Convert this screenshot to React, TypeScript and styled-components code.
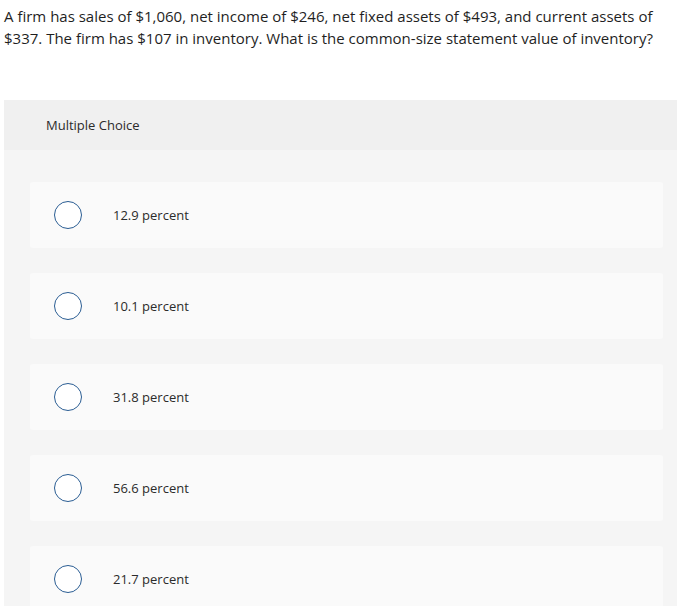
import React from 'react';
import styled, { createGlobalStyle } from 'styled-components';

const Global = createGlobalStyle`
	html, body {
		margin: 0;
		padding: 0;
		background: #ffffff;
		overflow: hidden;
	}
	body {
		font-family: "Open Sans", Arial, sans-serif;
		color: #222222;
	}
`;

const Page = styled.div`
	width: 685px;
	padding: 5px 0 0 4px;
`;

const Question = styled.p`
	margin: 0;
	font-size: 15px;
	line-height: 22px;
	color: #1f1f1f;
	max-width: 662px;
`;

const Panel = styled.section`
	margin-top: 51px;
	background: #f5f5f5;
`;

const PanelHeader = styled.div`
	height: 50px;
	display: flex;
	align-items: center;
	padding-left: 42px;
	background: #f0f0f0;
	font-size: 13px;
	color: #2b2b2b;
`;

const Options = styled.div`
	display: flex;
	flex-direction: column;
	gap: 25px;
	padding: 32px 26px 0 26px;
`;

const Option = styled.label`
	height: 66px;
	display: flex;
	align-items: center;
	gap: 31px;
	padding-left: 24px;
	background: #fafafa;
	border-radius: 3px;
	font-size: 13px;
	color: #2b2b2b;
	cursor: pointer;
`;

const Radio = styled.span`
	width: 26px;
	height: 26px;
	border: 1.5px solid #2a5d93;
	border-radius: 50%;
	background: #ffffff;
	flex-shrink: 0;
`;

const choices = ['12.9 percent', '10.1 percent', '31.8 percent', '56.6 percent', '21.7 percent'];

export default function App() {
	return (
		<Page>
			<Global />
			<Question>
				A firm has sales of $1,060, net income of $246, net fixed assets of $493, and current assets of $337. The
				firm has $107 in inventory. What is the common-size statement value of inventory?
			</Question>
			<Panel>
				<PanelHeader>Multiple Choice</PanelHeader>
				<Options>
					{choices.map((c) => (
						<Option key={c}>
							<Radio />
							{c}
						</Option>
					))}
				</Options>
			</Panel>
		</Page>
	);
}
